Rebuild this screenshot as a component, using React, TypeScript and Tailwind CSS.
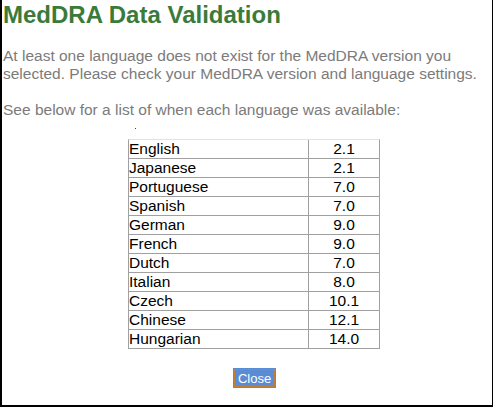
import React from "react";

const rows: [string, string][] = [
  ["English", "2.1"],
  ["Japanese", "2.1"],
  ["Portuguese", "7.0"],
  ["Spanish", "7.0"],
  ["German", "9.0"],
  ["French", "9.0"],
  ["Dutch", "7.0"],
  ["Italian", "8.0"],
  ["Czech", "10.1"],
  ["Chinese", "12.1"],
  ["Hungarian", "14.0"],
];

export default function App() {
  return (
    <div
      className="w-[493px] h-[407px] bg-white border-l-2 border-r border-b-2 border-black overflow-hidden pl-px"
      style={{ fontFamily: '"Liberation Sans", Arial, sans-serif' }}
    >
      <h1 className="mt-px text-[24px] leading-[27px] font-bold text-[#3a7b3a]">
        MedDRA Data Validation
      </h1>
      <p className="mt-[19px] text-[15.5px] leading-[18px] text-[#7b7b7b]">
        At least one language does not exist for the MedDRA version you
        <br />
        selected. Please check your MedDRA version and language settings.
        <br />
        <br />
        See below for a list of when each language was available:
      </p>
      <div className="h-[20px] pt-[9px] pl-[132px]">
        <div className="w-px h-px bg-[#e00000]" />
      </div>
      <div className="ml-[125px] w-[252px] border-x border-t border-[#a0a0a0] border-t-[#e2e2e2] text-[15.5px] leading-[18px] text-black">
        {rows.map(([lang, ver]) => (
          <div key={lang} className="flex h-[19px] border-b border-[#a0a0a0]">
            <div className="w-[180px] border-r border-[#a0a0a0]">{lang}</div>
            <div className="flex-1 text-center">{ver}</div>
          </div>
        ))}
      </div>
      <div className="mt-[19px] pl-[230px] flex">
        <button className="flex w-[43px] h-[20px] items-center justify-center bg-[#5a8cd4] text-[13px] leading-none text-white outline-1 outline-dotted outline-[#c8843c] -outline-offset-2">
          Close
        </button>
      </div>
    </div>
  );
}
